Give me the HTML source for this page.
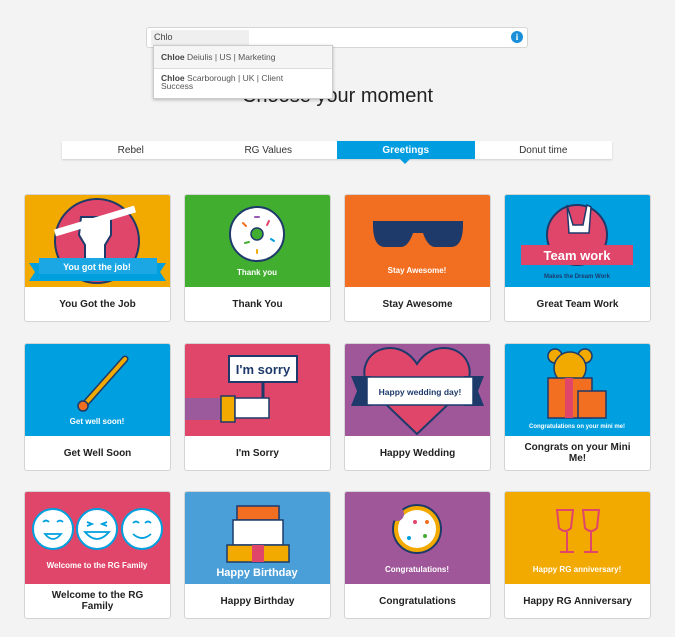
<!DOCTYPE html>
<html><head><meta charset="utf-8"><style>
*{box-sizing:border-box;margin:0;padding:0}
body{width:675px;height:637px;background:#f3f3f3;font-family:"Liberation Sans",sans-serif;position:relative;overflow:hidden;color:#333}
.search{position:absolute;left:146px;top:27px;width:382px;height:21px;background:#fff;border:1px solid #d6d6d6;border-radius:3px}
.search .q{position:absolute;left:4px;top:2px;width:98px;height:15px;background:#efefef;font-size:9px;line-height:15px;padding-left:3px;color:#444}
.info{position:absolute;right:4px;top:3px;width:12px;height:12px;border-radius:50%;background:#1a8fd8;color:#fff;font:bold 9px/12px "Liberation Serif",serif;text-align:center}
.dd{position:absolute;left:153px;top:45px;width:180px;height:54px;background:#fff;border:1px solid #ccc;box-shadow:0 1px 3px rgba(0,0,0,.25);z-index:5;font-size:8.5px;color:#555}
.dd div{padding:0 7px}
.dd .a{height:23px;line-height:23px;background:#f5f5f5;border-bottom:1px solid #ddd}
.dd .b{padding-top:5px;line-height:8px}
.dd b{color:#444}
h1{position:absolute;left:0;width:675px;top:85px;text-align:center;font-size:20px;font-weight:normal;color:#222}
.tabs{position:absolute;left:62px;top:141px;width:550px;height:18px;background:#fff;display:flex;box-shadow:0 1px 2px rgba(0,0,0,.15)}
.tabs div{flex:1;display:flex;align-items:center;justify-content:center;font-size:10px;color:#333}
.tabs .on{background:#009ee0;color:#fff;font-weight:bold;position:relative}
.tabs .on:after{content:"";position:absolute;left:63px;bottom:-5px;border:5px solid transparent;border-bottom:0;border-top-color:#009ee0}
.card{position:absolute;width:147px;height:128px;background:#fff;border:1px solid #d4d4d4;border-radius:3px;overflow:hidden}
.card svg{display:block;width:145px;height:92px}
.card .t{height:34px;display:flex;align-items:center;justify-content:center;text-align:center;font-size:10px;font-weight:bold;color:#222;line-height:11px;padding:0 12px}
svg text{font-family:"Liberation Sans",sans-serif;font-weight:bold;fill:#fff;text-anchor:middle}
</style></head><body>
<div class="search"><div class="q">Chlo</div><div class="info">i</div></div>
<div class="dd"><div class="a"><b>Chloe</b> Deiulis | US | Marketing</div><div class="b"><b>Chloe</b> Scarborough | UK | Client<br>Success</div></div>
<h1>Choose your moment</h1>
<div class="tabs"><div>Rebel</div><div>RG Values</div><div class="on">Greetings</div><div>Donut time</div></div>

<div class="card" style="left:24px;top:194px"><svg viewBox="0 0 145 92"><rect width="145" height="92" fill="#f2a900"/><circle cx="72" cy="46" r="42" fill="#e0456a" stroke="#1d3a6b" stroke-width="2"/><path d="M56 22h30v18l-6 10v16H60V50l-6-10z" fill="#fff" stroke="#1d3a6b" stroke-width="2"/><path d="M30 38l80-24" stroke="#fff" stroke-width="7"/><path d="M4 68h137l-6 9 6 9H4l6-9z" fill="#00a0df"/><rect x="14" y="63" width="118" height="16" fill="#1aa7e4"/><text x="72" y="75" font-size="9">You got the job!</text></svg><div class="t">You Got the Job</div></div>
<div class="card" style="left:184px;top:194px"><svg viewBox="0 0 145 92"><rect width="145" height="92" fill="#41ae30"/><circle cx="72" cy="39" r="27" fill="#fff" stroke="#1d3a6b" stroke-width="2"/><circle cx="72" cy="39" r="6" fill="#41ae30" stroke="#1d3a6b" stroke-width="1.5"/><g stroke-width="2" stroke-linecap="round"><path d="M58 28l3 3" stroke="#f26f21"/><path d="M84 26l-2 4" stroke="#e0456a"/><path d="M86 44l3 2" stroke="#00a0df"/><path d="M60 48l4-1" stroke="#41ae30"/><path d="M72 55v3" stroke="#f2a900"/><path d="M70 22h4" stroke="#9b59b6"/></g><text x="72" y="80" font-size="8">Thank you</text></svg><div class="t">Thank You</div></div>
<div class="card" style="left:344px;top:194px"><svg viewBox="0 0 145 92"><rect width="145" height="92" fill="#f26f21"/><path d="M28 26h90v4c0 14-4 22-12 22H90c-6 0-10-8-12-14h-10c-2 6-6 14-12 14H40c-8 0-12-8-12-22z" fill="#1d3a6b"/><text x="72" y="78" font-size="8">Stay Awesome!</text></svg><div class="t">Stay Awesome</div></div>
<div class="card" style="left:504px;top:194px"><svg viewBox="0 0 145 92"><rect width="145" height="92" fill="#009fdf"/><circle cx="72" cy="40" r="30" fill="#e0456a" stroke="#1d3a6b" stroke-width="2"/><path d="M62 10l6 20h10l4-20 4 2-2 26H64z" fill="#fff" stroke="#1d3a6b" stroke-width="1.5"/><path d="M16 50h112v20H16z" fill="#e0456a"/><text x="72" y="65" font-size="13">Team work</text><text x="72" y="83" font-size="6" style="fill:#1d3a6b">Makes the Dream Work</text></svg><div class="t">Great Team Work</div></div>

<div class="card" style="left:24px;top:343px"><svg viewBox="0 0 145 92"><rect width="145" height="92" fill="#009fdf"/><path d="M60 60l40-45" stroke="#1d3a6b" stroke-width="7" stroke-linecap="round"/><path d="M60 60l40-45" stroke="#f2a900" stroke-width="4" stroke-linecap="round"/><circle cx="58" cy="62" r="5" fill="#f26f21" stroke="#1d3a6b" stroke-width="1.5"/><text x="72" y="80" font-size="8">Get well soon!</text></svg><div class="t">Get Well Soon</div></div>
<div class="card" style="left:184px;top:343px"><svg viewBox="0 0 145 92"><rect width="145" height="92" fill="#e0456a"/><rect x="44" y="12" width="68" height="26" fill="#fff" stroke="#1d3a6b" stroke-width="2"/><text x="78" y="30" font-size="13" style="fill:#1d3a6b">I'm sorry</text><path d="M78 38v18" stroke="#1d3a6b" stroke-width="3"/><rect x="0" y="54" width="36" height="22" fill="#9b5a9c"/><rect x="36" y="52" width="14" height="26" fill="#f2a900" stroke="#1d3a6b" stroke-width="1.5"/><path d="M50 54h34v20H50z" fill="#fff" stroke="#1d3a6b" stroke-width="1.5"/></svg><div class="t">I'm Sorry</div></div>
<div class="card" style="left:344px;top:343px"><svg viewBox="0 0 145 92"><rect width="145" height="92" fill="#a0579a"/><path d="M72 90L28 48C10 30 22 4 45 4c13 0 22 8 27 16 5-8 14-16 27-16 23 0 35 26 17 44z" fill="#e0456a" stroke="#1d3a6b" stroke-width="2"/><path d="M6 32h20v30H6l6-15z M139 32h-20v30h20l-6-15z" fill="#1d3a6b"/><rect x="22" y="33" width="106" height="28" fill="#fff" stroke="#1d3a6b" stroke-width="1.5"/><text x="75" y="51" font-size="8.5" style="fill:#1d3a6b">Happy wedding day!</text></svg><div class="t">Happy Wedding</div></div>
<div class="card" style="left:504px;top:343px"><svg viewBox="0 0 145 92"><rect width="145" height="92" fill="#009fdf"/><circle cx="50" cy="12" r="7" fill="#f2a900" stroke="#1d3a6b" stroke-width="1.5"/><circle cx="80" cy="12" r="7" fill="#f2a900" stroke="#1d3a6b" stroke-width="1.5"/><circle cx="65" cy="24" r="16" fill="#f2a900" stroke="#1d3a6b" stroke-width="1.5"/><rect x="43" y="34" width="44" height="40" fill="#f26f21" stroke="#1d3a6b" stroke-width="1.5"/><rect x="73" y="47" width="28" height="27" fill="#f26f21" stroke="#1d3a6b" stroke-width="1.5"/><rect x="60" y="34" width="8" height="40" fill="#e0456a"/><text x="72" y="84" font-size="6">Congratulations on your mini me!</text></svg><div class="t">Congrats on your Mini Me!</div></div>

<div class="card" style="left:24px;top:491px"><svg viewBox="0 0 145 92"><rect width="145" height="92" fill="#e0456a"/><g fill="#fff" stroke="#00a0df" stroke-width="2"><circle cx="28" cy="37" r="20"/><circle cx="72" cy="37" r="20"/><circle cx="117" cy="37" r="20"/></g><g fill="none" stroke="#00a0df" stroke-width="1.8"><path d="M20 42q8 10 16 0z M60 40q12 14 24 0z M108 42q9 8 18 0 M18 30q3-3 6 0 M32 30q3-3 6 0 M62 30l5 2-5 2 M82 30l-5 2 5 2 M108 31q3-3 6 0 M120 31q3-3 6 0"/></g><text x="72" y="76" font-size="8">Welcome to the RG Family</text></svg><div class="t">Welcome to the RG Family</div></div>
<div class="card" style="left:184px;top:491px"><svg viewBox="0 0 145 92"><rect width="145" height="92" fill="#4b9fd8"/><rect x="52" y="14" width="42" height="14" fill="#f26f21" stroke="#1d3a6b" stroke-width="1.5"/><rect x="48" y="28" width="50" height="25" fill="#fff" stroke="#1d3a6b" stroke-width="1.5"/><rect x="42" y="53" width="62" height="17" fill="#f2a900" stroke="#1d3a6b" stroke-width="1.5"/><rect x="67" y="53" width="12" height="17" fill="#e0456a"/><text x="72" y="84" font-size="11">Happy Birthday</text></svg><div class="t">Happy Birthday</div></div>
<div class="card" style="left:344px;top:491px"><svg viewBox="0 0 145 92"><rect width="145" height="92" fill="#a0579a"/><circle cx="72" cy="37" r="24" fill="#f2a900" stroke="#1d3a6b" stroke-width="2"/><circle cx="72" cy="37" r="19" fill="#fff"/><circle cx="52" cy="22" r="7" fill="#a0579a"/><g fill="#e0456a"><circle cx="70" cy="30" r="2"/><circle cx="80" cy="44" r="2" fill="#41ae30"/><circle cx="64" cy="46" r="2" fill="#00a0df"/><circle cx="82" cy="30" r="2" fill="#f26f21"/></g><text x="72" y="80" font-size="8">Congratulations!</text></svg><div class="t">Congratulations</div></div>
<div class="card" style="left:504px;top:491px"><svg viewBox="0 0 145 92"><rect width="145" height="92" fill="#f2a900"/><g fill="none" stroke="#e0456a" stroke-width="2"><path d="M52 18h16l-2 18q-6 6-12 0z M62 40v20 M55 60h14"/><path d="M78 18h16l-2 18q-6 6-12 0z M86 40v20 M79 60h14"/></g><text x="72" y="80" font-size="8">Happy RG anniversary!</text></svg><div class="t">Happy RG Anniversary</div></div>
</body></html>
